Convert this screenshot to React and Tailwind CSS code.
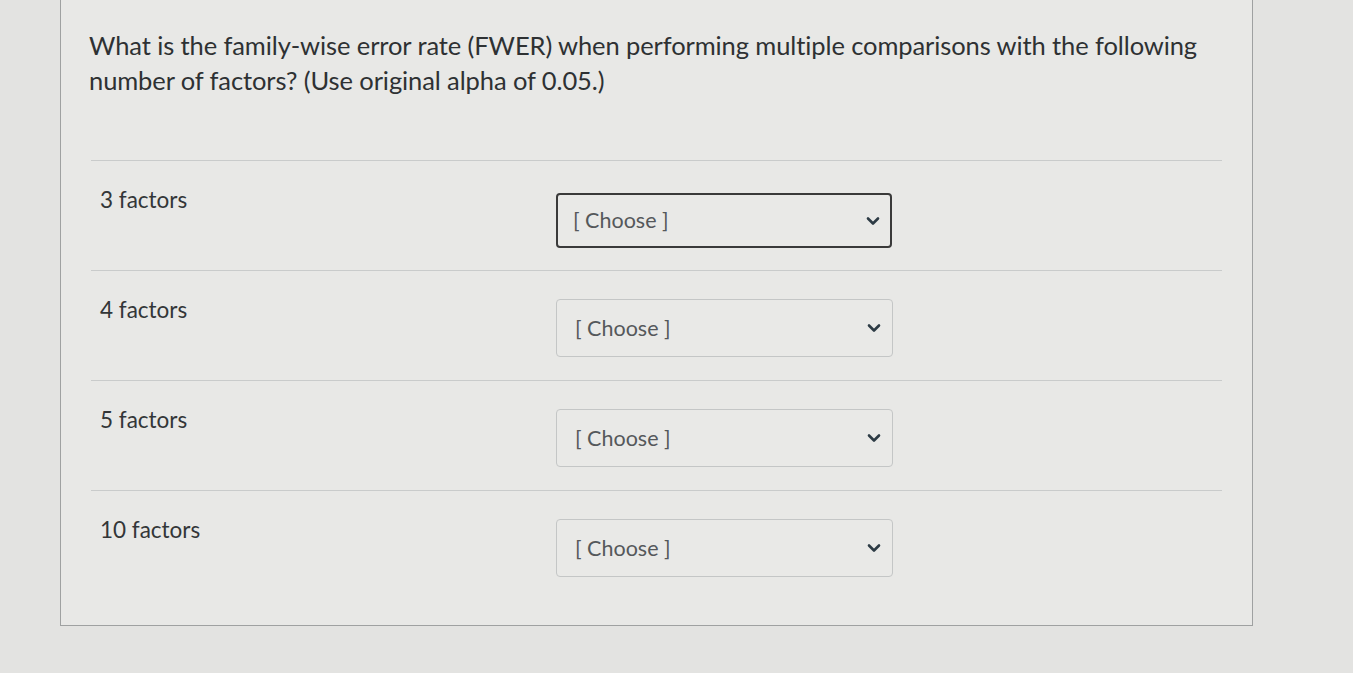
import React from 'react'

const rows = [
    {label: '3 factors', focused: true},
    {label: '4 factors'},
    {label: '5 factors'},
    {label: '10 factors'},
];

const Chevron = () => (
    <svg width="14" height="10" viewBox="0 0 14 10" fill="none">
        <path d="M2 2.5 L7 7.5 L12 2.5" stroke="#2d3b45" strokeWidth="2.6" strokeLinecap="round" strokeLinejoin="round" />
    </svg>
);

const ChooseSelect = ({focused}) => (
    <div
        className={
            focused
                ? "w-[336px] h-[55px] rounded-[4px] border-2 border-[#3a3a3a] flex items-center justify-between pl-[15px] pr-[10px] bg-[#e9e9e7]"
                : "w-[337px] h-[58px] rounded-[4px] border border-[#c4c6c6] flex items-center justify-between pl-[18px] pr-[11px] bg-[#e9e9e7]"
        }
    >
        <span className="text-[21.5px] text-[#55585b]">[ Choose ]</span>
        <Chevron />
    </div>
);

export default function App() {
    return (
        <div className="min-h-[673px] bg-[#e3e3e1] pl-[60px] pr-[100px] pb-[47px] font-['Lato','Noto_Sans',sans-serif]">
            <div className="h-[626px] border-x border-b border-[#9fa1a1] bg-[#e8e8e6]">
                <div className="pl-[28px] pr-[30px] pt-[28px] h-[160px]">
                    <p className="text-[25.5px] leading-[35px] text-[#2e3133] tracking-[-0.1px]">
                        What is the family-wise error rate (FWER) when performing multiple comparisons with the following number of factors? (Use original alpha of 0.05.)
                    </p>
                </div>
                <div className="mx-[30px]">
                    {rows.map((row) => (
                        <div
                            key={row.label}
                            className="h-[110px] border-t border-[#c9cbcb] flex pt-[26px] pl-[9px]"
                        >
                            <div className="w-[456px] text-[22.5px] leading-[26px] text-[#333638]">{row.label}</div>
                            <div className={row.focused ? "pt-[6px]" : "pt-[2px]"}>
                                <ChooseSelect focused={row.focused} />
                            </div>
                        </div>
                    ))}
                </div>
            </div>
        </div>
    )
}
